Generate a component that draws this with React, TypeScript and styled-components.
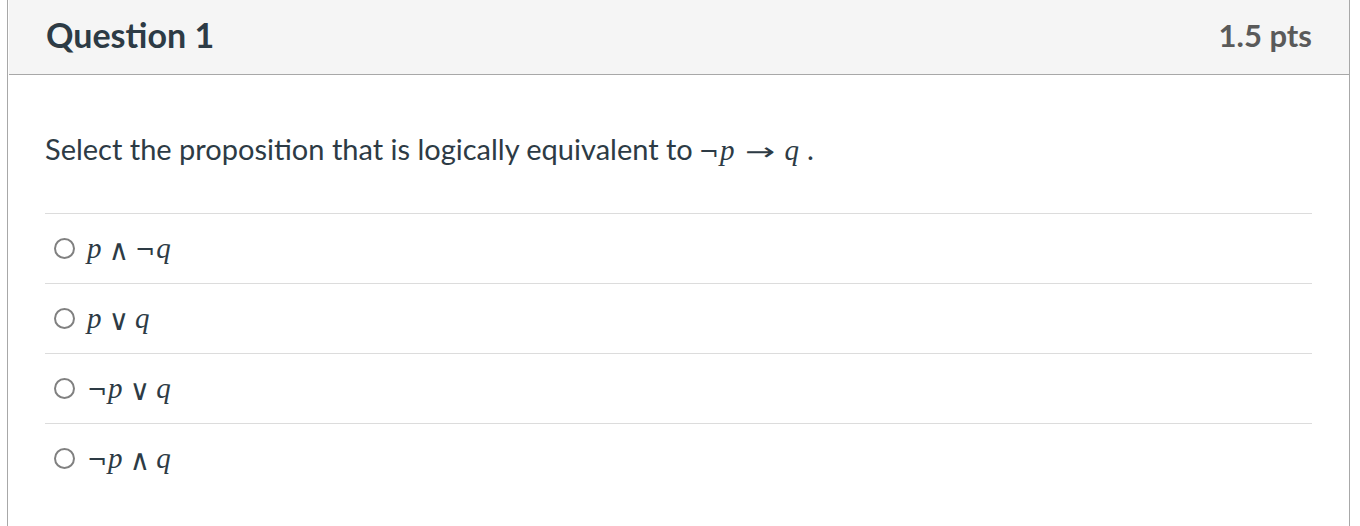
import styled, { createGlobalStyle } from 'styled-components';

const GlobalStyle = createGlobalStyle`
  body {
    margin: 0;
    background: #ffffff;
    font-family: Lato, "Noto Sans", sans-serif;
  }
`;

const QuestionCard = styled.div`
  margin-left: 7px;
  width: 1343px;
  height: 526px;
  box-sizing: border-box;
  border-left: 1px solid #a8a8a8;
  border-right: 1px solid #a8a8a8;
  background: #ffffff;
`;

const Header = styled.div`
  display: flex;
  align-items: center;
  justify-content: space-between;
  height: 74px;
  padding: 0 37px;
  margin-left: 1px;
  background: #f5f5f5;
  border-bottom: 1px solid #a8a8a8;
`;

const QuestionName = styled.h2`
  margin: 0 0 5px;
  font-size: 34px;
  font-weight: 700;
  color: #2d3b45;
`;

const Points = styled.span`
  margin-bottom: 5px;
  font-size: 31px;
  font-weight: 700;
  color: #5a5a5a;
`;

const Body = styled.div`
  padding: 56px 37px 0 37px;
`;

const QuestionText = styled.p`
  margin: 0 0 46px;
  font-size: 29px;
  line-height: 36px;
  color: #2d3b45;
`;

const AnswerList = styled.ul`
  list-style: none;
  margin: 0;
  padding: 0;
`;

const AnswerRow = styled.li`
  display: flex;
  align-items: center;
  gap: 12px;
  height: 69px;
  padding-left: 9px;
  border-top: 1px solid #dcdcdc;
`;

const Radio = styled.span`
  display: inline-block;
  width: 17px;
  height: 17px;
  border: 2px solid #808080;
  border-radius: 50%;
  flex-shrink: 0;
`;

const Math = styled.span<{ $inline?: boolean }>`
  font-family: "DejaVu Serif", "Liberation Serif", serif;
  font-size: 29px;
  line-height: 1;
  color: #2d3b45;
  white-space: nowrap;
  margin-left: ${(props) => (props.$inline ? '6px' : '0')};
`;

const MathVar = styled.i`
  font-family: "Liberation Serif", serif;
  font-style: italic;
`;

const MathOp = styled.span<{ $tight?: boolean }>`
  display: inline-block;
  font-family: "DejaVu Sans", "DejaVu Serif", serif;
  font-size: 24px;
  margin: 0 ${(props) => (props.$tight ? '1px 0 0' : '8px')};
  transform: ${(props) => (props.$tight ? 'none' : 'scale(1.15, 1.2)')};
`;

const Arrow = styled.span`
  display: inline-block;
  font-family: "DejaVu Sans", serif;
  font-size: 24px;
  margin: 0 14px 0 16px;
  transform: scaleX(1.5);
`;

const Period = styled.span`
  margin-left: 8px;
`;

type Token = { kind: 'var' | 'bin' | 'un' | 'arrow'; text: string };

function Formula({ tokens, inline }: { tokens: Token[]; inline?: boolean }) {
  return (
    <Math $inline={inline}>
      {tokens.map((t, i) => {
        if (t.kind === 'var') return <MathVar key={i}>{t.text}</MathVar>;
        if (t.kind === 'arrow') return <Arrow key={i}>{t.text}</Arrow>;
        return (
          <MathOp key={i} $tight={t.kind === 'un'}>
            {t.text}
          </MathOp>
        );
      })}
    </Math>
  );
}

const v = (text: string): Token => ({ kind: 'var', text });
const bin = (text: string): Token => ({ kind: 'bin', text });
const neg: Token = { kind: 'un', text: '¬' };
const to: Token = { kind: 'arrow', text: '→' };

const answers: Token[][] = [
  [v('p'), bin('∧'), neg, v('q')],
  [v('p'), bin('∨'), v('q')],
  [neg, v('p'), bin('∨'), v('q')],
  [neg, v('p'), bin('∧'), v('q')],
];

export default function App() {
  return (
    <>
      <GlobalStyle />
      <QuestionCard>
        <Header>
          <QuestionName>Question 1</QuestionName>
          <Points>1.5 pts</Points>
        </Header>
        <Body>
          <QuestionText>
            Select the proposition that is logically equivalent to
            <Formula inline tokens={[neg, v('p'), to, v('q')]} />
            <Period>.</Period>
          </QuestionText>
          <AnswerList>
            {answers.map((tokens, i) => (
              <AnswerRow key={i}>
                <Radio />
                <Formula tokens={tokens} />
              </AnswerRow>
            ))}
          </AnswerList>
        </Body>
      </QuestionCard>
    </>
  );
}
